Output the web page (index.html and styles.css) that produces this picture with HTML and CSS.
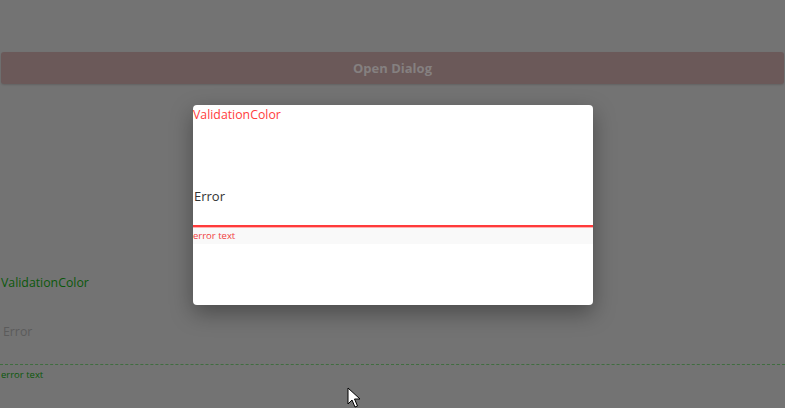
FILE: index.html
```html
<!DOCTYPE html>
<html>
<head>
<meta charset="utf-8">
<link rel="stylesheet" href="styles.css">
</head>
<body>
<div class="page">
  <div class="top-space"></div>
  <div class="btn-row"><button class="open-btn">Open Dialog</button></div>
  <div class="spacer"></div>
  <div class="field">
    <div class="field-label">ValidationColor</div>
    <div class="field-input">Error</div>
    <div class="field-help">error text</div>
  </div>
</div>
<div class="dialog">
  <div class="dlg-label">ValidationColor</div>
  <div class="dlg-input">Error</div>
  <div class="dlg-help">error text</div>
</div>
<svg class="cursor" width="14" height="22" viewBox="0 0 14 22"><path d="M1 1 L1 17 L5 13 L8 20 L10.5 19 L7.5 12 L13 12 Z" fill="#fff" stroke="#000" stroke-width="1"/></svg>
</body>
</html>
```
FILE: styles.css
```css
html, body { margin: 0; padding: 0; }
body {
  width: 785px; height: 408px; overflow: hidden;
  background: #737373;
  font-family: "Open Sans", "Noto Sans", sans-serif;
  position: relative;
}
.page { display: flex; flex-direction: column; }
.top-space { height: 52px; }
.btn-row { padding: 0 1px; }
.open-btn {
  display: block; width: 100%; height: 32px;
  background: #6b5959; border: none; border-radius: 3px;
  color: #858080; font-family: inherit; font-weight: 700; font-size: 13px;
  box-shadow: 0 1px 2px rgba(0,0,0,0.15);
}
.spacer { height: 190px; }
.field { display: flex; flex-direction: column; }
.field-label { color: #0b580b; font-size: 12.3px; height: 18px; line-height: 18px; padding-left: 1px; }
.field-input { color: #5b5b5b; font-size: 12.3px; margin-top: 31px; height: 18px; line-height: 18px; padding-left: 3px; border-bottom: 1px dashed #3f6d3f; padding-bottom: 23px; }
.field-help { color: #0b580b; font-size: 9.5px; line-height: 14px; padding-left: 1px; margin-top: 3px; }
.dialog {
  position: absolute; left: 193px; top: 105px; width: 400px; height: 200px;
  background: #fff; border-radius: 4px;
  box-shadow: 0 8px 22px rgba(0,0,0,0.35);
  display: flex; flex-direction: column;
}
.dlg-label { color: #ff3c3c; font-size: 12.3px; line-height: 18px; height: 18px; padding-top: 1px; }
.dlg-input { color: #333; font-size: 13px; margin-top: 62px; height: 20px; line-height: 20px; padding-left: 1px; padding-bottom: 19px; border-bottom: 2px solid #ff3a3a; box-shadow: 0 1px 0 #ffb0b0; }
.dlg-help { background: #f9f9f9; color: #f04040; font-size: 9.5px; line-height: 16px; height: 16px; margin-top: 1px; }
.cursor { position: absolute; left: 347px; top: 387px; }
```
